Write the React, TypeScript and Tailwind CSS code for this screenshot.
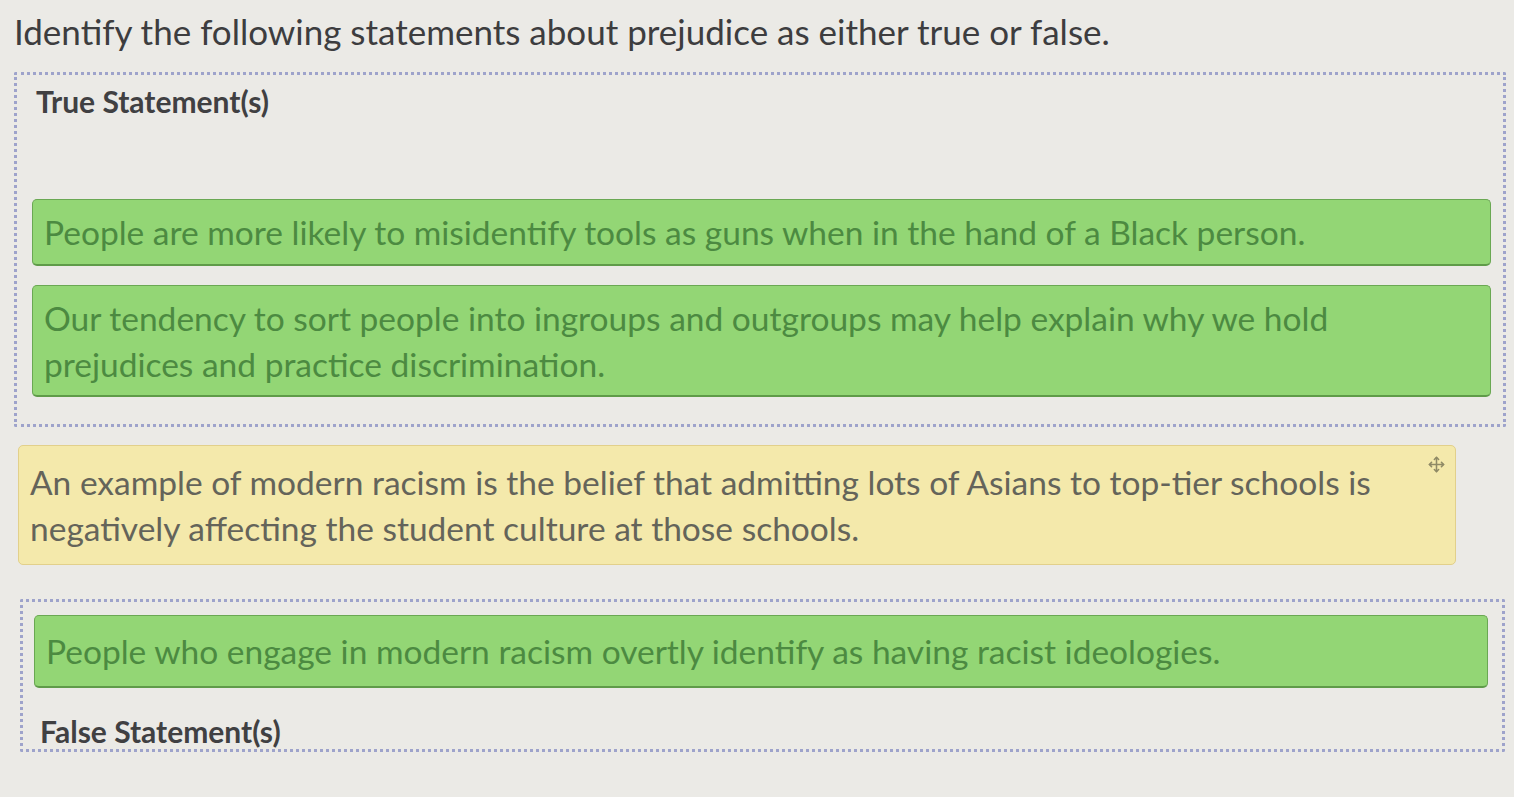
import { Move } from "lucide-react";

type Card = { text: string; tone: "green" | "yellow" };

const trueItems: Card[] = [
  { text: "People are more likely to misidentify tools as guns when in the hand of a Black person.", tone: "green" },
  {
    text: "Our tendency to sort people into ingroups and outgroups may help explain why we hold prejudices and practice discrimination.",
    tone: "green",
  },
];

const falseItems: Card[] = [
  { text: "People who engage in modern racism overtly identify as having racist ideologies.", tone: "green" },
];

function StatementCard({ text, className = "" }: { text: string; className?: string }) {
  return (
    <div
      className={`rounded-[5px] border border-[#6aa853] border-b-2 border-b-[#5f9b49] bg-[#93d675] px-[11px] text-[33.5px] leading-[46px] text-[#4c8a41] ${className}`}
    >
      <p className="max-w-[1400px]">{text}</p>
    </div>
  );
}

export default function App() {
  return (
    <div className="min-h-screen bg-[#ebeae6] pt-[9px] pl-[14px] pr-[8px] font-['Lato',sans-serif]">
      <h1 className="text-[35px] leading-[44px] text-[#3d3d3f]">
        Identify the following statements about prejudice as either true or false.
      </h1>

      {/* true bucket */}
      <section className="mt-[19px] rounded-[2px] border-[3px] border-dotted border-[#9ea3cb] pt-[11px] pl-[15px] pr-[12px] pb-[27px]">
        <h2 className="pl-[4px] text-[30px] font-bold leading-[30px] text-[#404042]">True Statement(s)</h2>
        <div className="mt-[83px] flex flex-col gap-[19px]">
          <StatementCard text={trueItems[0].text} className="py-[9px]" />
          <StatementCard text={trueItems[1].text} className="pt-[9px] pb-[8px]" />
        </div>
      </section>

      {/* unsorted card */}
      <div className="relative mt-[18px] ml-[4px] w-[1438px] rounded-[5px] border border-[#e2d08b] bg-[#f4e9ab] pt-[13px] pb-[13px] pl-[11px] pr-[60px] text-[33.5px] leading-[46px] text-[#64645a]">
        <p className="max-w-[1360px]">
          An example of modern racism is the belief that admitting lots of Asians to top-tier schools is negatively affecting the
          student culture at those schools.
        </p>
        <Move className="absolute top-[10px] right-[10px] h-[17px] w-[17px] text-[#8f8a66]" strokeWidth={2.2} />
      </div>

      {/* false bucket */}
      <section className="mt-[34px] ml-[6px] mr-[1px] rounded-[2px] border-[3px] border-dotted border-[#9ea3cb] pt-[13px] pl-[11px] pr-[14px] pb-[3px]">
        {falseItems.map((item) => (
          <StatementCard key={item.text} text={item.text} className="pt-[12px] pb-[12px]" />
        ))}
        <h2 className="mt-[28px] pl-[6px] text-[30px] font-bold leading-[30px] text-[#404042]">False Statement(s)</h2>
      </section>
    </div>
  );
}
